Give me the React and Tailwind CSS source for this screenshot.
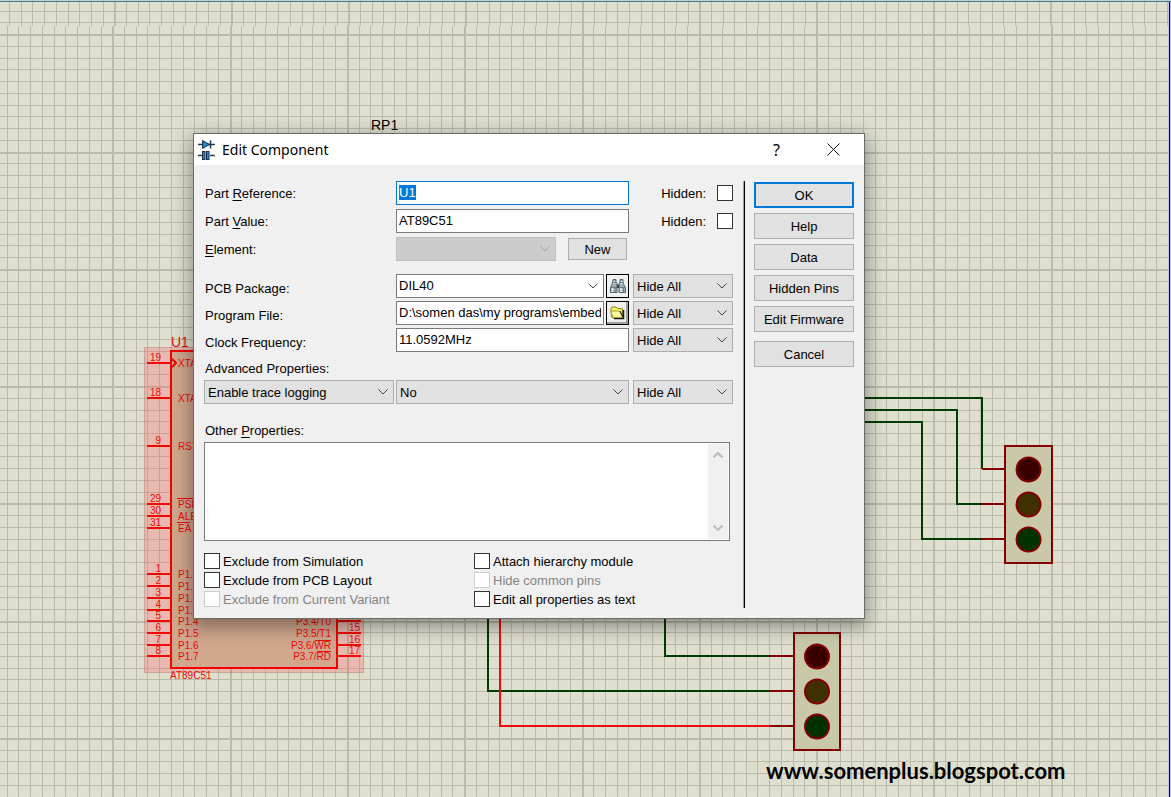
import clsx from "clsx";

const PITCH = 11.73;
const steps = Array.from({ length: 260 }, (_, i) => i);

const LEFT_PINS = [
  { y: 363, num: "19", name: "XTAL1" },
  { y: 398, num: "18", name: "XTAL2" },
  { y: 446, num: "9", name: "RST" },
  { y: 504, num: "29", name: "PSEN", bar: 26 },
  { y: 516, num: "30", name: "ALE" },
  { y: 528, num: "31", name: "EA", bar: 13 },
  { y: 574, num: "1", name: "P1.0" },
  { y: 586, num: "2", name: "P1.1" },
  { y: 598, num: "3", name: "P1.2" },
  { y: 610, num: "4", name: "P1.3" },
  { y: 621, num: "5", name: "P1.4" },
  { y: 633, num: "6", name: "P1.5" },
  { y: 645, num: "7", name: "P1.6" },
  { y: 656, num: "8", name: "P1.7" },
];

const RIGHT_PINS = [
  { y: 621, num: "14", name: "P3.4/T0" },
  { y: 633, num: "15", name: "P3.5/T1" },
  { y: 645, num: "16", name: "P3.6/WR", bar: 16 },
  { y: 656, num: "17", name: "P3.7/RD", bar: 14 },
];

function Grid() {
  return (
    <g fill="#bbbbac" shapeRendering="crispEdges">
      {/* the strip above y=26 has its columns shifted by two pixels */}
      {steps.map(i => (
        <rect key={`s${i}`} x={Math.floor(114.8 + (i - 9) * 11.7)} y="2" width={i % 10 === 9 ? 2 : 1} height="24" />
      ))}
      {steps.map(i => (
        <rect key={`v${i}`} x={Math.floor(112.8 + (i - 9) * PITCH)} y="26" width={i % 10 === 9 ? 2 : 1} height="2400" />
      ))}
      {steps.map(i => (
        <rect key={`h${i}`} x="0" y={Math.floor(34.7 + (i - 2) * PITCH)} width="3000" height={i % 10 === 2 ? 2 : 1} />
      ))}
    </g>
  );
}

function Chip() {
  return (
    <g fontFamily='"Liberation Sans", sans-serif' fontSize="10" fill="#f00808">
      <rect x="144.5" y="347.5" width="219" height="325" fill="rgba(255,87,87,0.28)" stroke="rgba(170,90,80,0.35)" />
      <rect x="171" y="351" width="166" height="317" fill="#d1a78d" stroke="#f40000" strokeWidth="2" />
      <path d="M172 359 L176 363 L172 367" fill="none" stroke="#f40000" strokeWidth="2" />
      {LEFT_PINS.map(p => (
        <g key={p.num}>
          <rect x="147" y={p.y - 1} width="24" height="2" />
          <text x="161" y={p.y - 2} textAnchor="end">{p.num}</text>
          <text x="178" y={p.y + 4}>{p.name}</text>
          {p.bar && <rect x="177" y={p.y - 6} width={p.bar} height="1" />}
        </g>
      ))}
      {RIGHT_PINS.map(p => (
        <g key={p.num}>
          <rect x="337" y={p.y - 1} width="24" height="2" />
          <text x="360" y={p.y - 2} textAnchor="end">{p.num}</text>
          <text x="331" y={p.y + 4} textAnchor="end">{p.name}</text>
          {p.bar && <rect x={331 - p.bar} y={p.y - 5} width={p.bar} height="1" />}
        </g>
      ))}
      <text x="170" y="679">AT89C51</text>
      <text x="171" y="347" fontSize="14">U1</text>
    </g>
  );
}

function TrafficLight({ x, y, width }) {
  const cx = width / 2;
  return (
    <g transform={`translate(${x} ${y})`} stroke="#820000" strokeWidth="2">
      <rect x="0" y="0" width={width} height="117" fill="#c9c9aa" />
      <circle cx={cx} cy="23.5" r="12" fill="#3a0000" />
      <circle cx={cx} cy="58.5" r="12" fill="#403000" />
      <circle cx={cx} cy="93.5" r="12" fill="#003200" />
    </g>
  );
}

function Schematic() {
  return (
    <svg className="absolute left-0 top-0 h-full w-full" aria-hidden="true">
      <Grid />
      <Chip />
      <g fill="none" stroke="#003c00" strokeWidth="2" shapeRendering="crispEdges">
        <path d="M800 398 H982 V469" />
        <path d="M800 410 H957 V504 H982" />
        <path d="M800 422 H922 V539 H982" />
        <path d="M665 600 V656 H770" />
        <path d="M488 600 V691 H770" />
        <path d="M500 600 V726 H770" stroke="#f00a0a" />
        <path d="M982 469 H1004 M982 504 H1004 M982 539 H1004 M770 656 H794 M770 691 H794 M770 726 H794" stroke="#820000" />
      </g>
      <TrafficLight x={1005} y={446} width={47} />
      <TrafficLight x={794} y={633} width={46} />
      <text x="371" y="130" fontSize="14" fontFamily='"Liberation Sans", sans-serif'>RP1</text>
      <text x="766" y="779" fontSize="22" fontWeight="700" fontFamily="Lato, sans-serif">www.somenplus.blogspot.com</text>
    </svg>
  );
}

function ComponentIcon() {
  return (
    <svg width="17" height="20" viewBox="0 0 17 20" aria-hidden="true">
      <path d="M0 4.5 H17 M0 15.5 H5 M12 15.5 H17" stroke="#2d3b48" strokeWidth="1.5" />
      <path d="M4.5 .5 V8.5 L11.5 4.5 Z" fill="#1c84c8" stroke="#1d3448" />
      <path d="M12.5 .5 V8.5" stroke="#1d3448" strokeWidth="1.5" />
      <rect x="4.5" y="11.5" width="2.5" height="8" fill="#1c84c8" stroke="#1d3448" />
      <rect x="8.5" y="11.5" width="2.5" height="8" fill="#1c84c8" stroke="#1d3448" />
    </svg>
  );
}

function BinocularsIcon() {
  return (
    <svg width="16" height="15" viewBox="0 0 16 15" aria-hidden="true">
      <path d="M3 .5 H6 V3 L7 5 V13.5 H.5 V9 L2.5 4 Z M10 .5 H13 V4 L15.5 9 V13.5 H9 V5 L10 3 Z" fill="#a3b0b9" stroke="#55626b" />
      <path d="M7 5.5 H9 V9 H7 Z" fill="#39434b" />
      <path d="M2.5 9 V13 M11 9 V13 M4 2 V5 M11.5 2 V5" stroke="#e4edf2" strokeWidth="1.5" />
      <path d="M5 9 V13 M13.5 9 V13" stroke="#6d7982" />
      <path d="M1 8.5 H7 M9 8.5 H15 M3 3.5 H6 M10 3.5 H13" stroke="#6d7982" />
    </svg>
  );
}

function FolderIcon() {
  return (
    <svg width="15" height="14" viewBox="0 0 15 14" aria-hidden="true">
      <path d="M1.5 11 L.8 3 L2 1 H6 L7.5 2.5 H12.5 V12 H3 Z" fill="#f3ee62" stroke="#8c8a1a" />
      <path d="M13.5 4 V12.5 H4" fill="none" stroke="#16160a" strokeWidth="1.5" />
      <path d="M.8 5 H9.5 L12.5 11.5 H3 Z" fill="#fbf9a4" stroke="#a5a22c" />
      <path d="M10 5 L12.8 11" stroke="#16160a" />
    </svg>
  );
}

function Chevron({ className, up }) {
  return (
    <svg className={className} width="10" height="6" viewBox="0 0 10 6" fill="none" stroke="currentColor" aria-hidden="true">
      <path d={up ? "M.5 5.5 L5 1 L9.5 5.5" : "M.5 .5 L5 5 L9.5 .5"} strokeWidth={up === undefined ? 1 : 2} />
    </svg>
  );
}

function Select({ id, label, value, className, white, disabled }) {
  return (
    <div className={clsx("relative h-6", className)}>
      <select
        id={id}
        aria-label={label}
        disabled={disabled}
        defaultValue={value}
        className={clsx(
          "block h-6 w-full appearance-none border pr-4 outline-none",
          disabled && "border-[#bfbfbf] bg-[#cccccc]",
          !disabled && white && "border-[#7a7a7a] bg-white pl-0.5",
          !disabled && !white && "border-[#adadad] bg-[#e1e1e1] pl-[3px] pt-px"
        )}
      >
        <option>{value}</option>
      </select>
      <Chevron className={clsx("pointer-events-none absolute right-1.5 top-[9px]", disabled ? "text-[#a3a3a3]" : "text-[#444]")} />
    </div>
  );
}

function TextBox({ id, value, focused, className }) {
  return (
    <input
      id={id}
      type="text"
      defaultValue={value}
      autoFocus={focused}
      onFocus={focused ? e => e.target.select() : undefined}
      className={clsx(
        "h-6 border bg-white px-0.5 pb-0.5 outline-none selection:bg-[#0078d7] selection:text-white",
        focused ? "border-[#0078d7]" : "border-[#7a7a7a]",
        className
      )}
    />
  );
}

function Check({ children, disabled }) {
  return (
    <label className={clsx("flex h-[19px] items-center gap-[3px]", disabled && "text-[#838383]")}>
      <input
        type="checkbox"
        disabled={disabled}
        className={clsx("size-4 shrink-0 appearance-none border bg-white", disabled ? "border-[#cccccc]" : "border-[#333]")}
      />
      <span className="pt-0.5">{children}</span>
    </label>
  );
}

function HiddenCheck() {
  return (
    <label className="flex items-center justify-end gap-[11px]">
      <span className="pt-0.5">Hidden:</span>
      <input type="checkbox" className="size-4 appearance-none border border-[#333] bg-white" />
    </label>
  );
}

function SideButton({ children, primary, className }) {
  return (
    <button
      type="button"
      className={clsx("h-[26px] w-full bg-[#e1e1e1] pt-0.5", primary ? "border-2 border-[#0078d7]" : "border border-[#adadad]", className)}
    >
      {children}
    </button>
  );
}

const ROW = "grid grid-cols-[192px_233px_104px] items-center";

function EditComponentDialog() {
  return (
    <form
      role="dialog"
      aria-labelledby="dialog-title"
      onSubmit={e => e.preventDefault()}
      className="absolute left-[193px] top-[133px] w-[672px] border border-[#6a6a68] bg-[#f0f0f0] font-['Liberation_Sans',Arial,sans-serif] text-[13px] leading-4 text-black shadow-[0_6px_18px_2px_rgba(0,0,0,0.38)]"
    >
      <header className="flex h-[31px] items-center bg-white pl-1 pr-0.5">
        <ComponentIcon />
        <h1 id="dialog-title" className="flex-1 pl-[7px] font-['Noto_Sans','Open_Sans',sans-serif] text-[14px]">Edit Component</h1>
        <button type="button" className="h-full w-[57px] font-['Noto_Sans','Open_Sans',sans-serif] text-[16px]">?</button>
        <button type="button" aria-label="Close" className="flex h-full w-[57px] items-center justify-center">
          <svg width="13" height="13" viewBox="0 0 13 13" stroke="#111" aria-hidden="true">
            <path d="M.5 .5 L12.5 12.5 M12.5 .5 L.5 12.5" />
          </svg>
        </button>
      </header>

      <div className="flex pb-2.5 pl-2.5 pr-2.5 pt-4">
        <div className="w-[529px]">
          <div className="flex flex-col gap-1">
            <div className={ROW}>
              <label htmlFor="part-ref" className="pl-px pt-0.5">Part <u className="underline-offset-2">R</u>eference:</label>
              <TextBox id="part-ref" value="U1" focused />
              <HiddenCheck />
            </div>
            <div className={ROW}>
              <label htmlFor="part-value" className="pl-px pt-0.5">Part <u className="underline-offset-2">V</u>alue:</label>
              <TextBox id="part-value" value="AT89C51" />
              <HiddenCheck />
            </div>
            <div className={ROW}>
              <label htmlFor="element" className="pl-px pt-0.5"><u className="underline-offset-2">E</u>lement:</label>
              <div className="flex items-center gap-3">
                <Select id="element" value="" disabled className="w-40" />
                <button type="button" className="h-[22px] w-[59px] border border-[#adadad] bg-[#e1e1e1] pt-0.5">New</button>
              </div>
            </div>
          </div>

          <div className="mt-[13px] flex flex-col gap-[3px]">
            <div className="flex">
              <label htmlFor="package" className="w-48 pl-px pt-[7px]">PCB Package:</label>
              <Select id="package" value="DIL40" white className="mr-0.5 w-52" />
              <button type="button" aria-label="Browse packages" className="mr-1 flex h-6 w-[23px] items-center justify-center border border-black bg-[#f0f0f0]">
                <BinocularsIcon />
              </button>
              <Select label="Package visibility" value="Hide All" className="flex-1" />
            </div>
            <div className="flex">
              <label htmlFor="program" className="w-48 pl-px pt-[7px]">Program File:</label>
              <TextBox id="program" value="D:\somen das\my programs\embedded" className="mr-0.5 w-52" />
              <button type="button" aria-label="Browse files" className="mr-1 flex h-6 w-[23px] items-center justify-center border border-black bg-[#f0f0f0] shadow-[inset_-2px_-2px_0_#a0a0a0]">
                <FolderIcon />
              </button>
              <Select label="Program file visibility" value="Hide All" className="flex-1" />
            </div>
            <div className="flex">
              <label htmlFor="clock" className="w-48 pl-px pt-[7px]">Clock Frequency:</label>
              <TextBox id="clock" value="11.0592MHz" className="mr-1 w-[233px]" />
              <Select label="Clock visibility" value="Hide All" className="flex-1" />
            </div>
          </div>

          <label htmlFor="advanced" className="mb-[3px] mt-[9px] block pl-px">Advanced Properties:</label>
          <div className="flex">
            <Select id="advanced" value="Enable trace logging" className="mr-0.5 w-[190px]" />
            <Select label="Property value" value="No" className="mr-1 w-[233px]" />
            <Select label="Property visibility" value="Hide All" className="flex-1" />
          </div>

          <label htmlFor="other" className="mb-[3px] mt-[19px] block pl-px">Other <u className="underline-offset-2">P</u>roperties:</label>
          <div className="flex h-[99px] w-[526px] border border-[#7a7a7a] bg-white p-px">
            <textarea id="other" className="flex-1 resize-none p-0.5 outline-none" />
            <div className="flex w-5 flex-col items-center justify-between bg-[#f0f0f0] py-2 text-[#bcbcbc]">
              <Chevron up />
              <Chevron up={false} />
            </div>
          </div>

          <div className="mt-2.5 grid grid-cols-[270px_1fr]">
            <Check>Exclude from Simulation</Check>
            <Check>Attach hierarchy module</Check>
            <Check>Exclude from PCB Layout</Check>
            <Check disabled>Hide common pins</Check>
            <Check disabled>Exclude from Current Variant</Check>
            <Check>Edit all properties as text</Check>
          </div>
        </div>

        <div className="ml-2.5 mr-[9px] w-0.5 border-l border-[#a0a0a0] bg-black" />

        <div className="flex flex-1 flex-col gap-[5px] pt-px">
          <SideButton primary>OK</SideButton>
          <SideButton>Help</SideButton>
          <SideButton>Data</SideButton>
          <SideButton>Hidden Pins</SideButton>
          <SideButton>Edit Firmware</SideButton>
          <SideButton className="mt-1">Cancel</SideButton>
        </div>
      </div>
    </form>
  );
}

export default function App() {
  return (
    <main className="relative h-screen min-h-[640px] w-full overflow-hidden bg-[#dfdfd0]">
      <Schematic />
      <div className="absolute inset-x-0 top-0 h-0.5 border-b border-[#55787f] bg-[#b9d3da]" />
      <div className="absolute bottom-0 right-0 top-0.5 w-[3px] border-x border-[#c3c3ee] bg-[#000080]" />
      <EditComponentDialog />
    </main>
  );
}
